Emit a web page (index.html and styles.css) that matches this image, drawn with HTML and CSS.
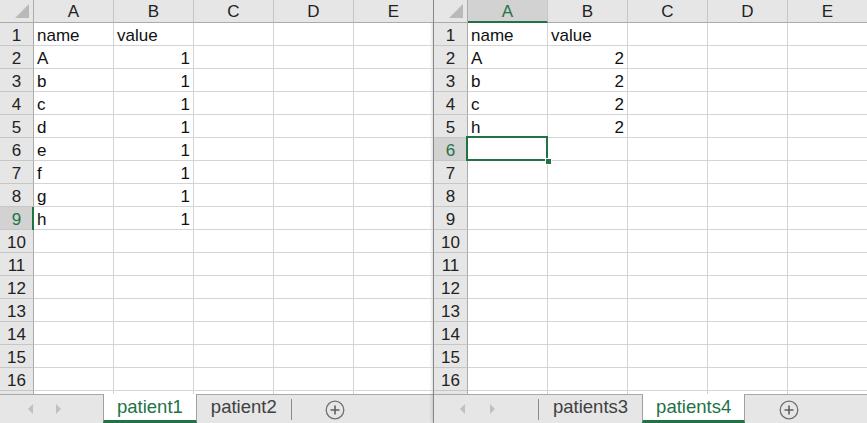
FILE: index.html
```html
<!DOCTYPE html>
<html>
<head>
<meta charset="utf-8">
<link rel="stylesheet" href="styles.css">
</head>
<body>
<div class="app">
  <div class="pane left">
    <div class="grid">
      <div class="c h corner"><svg class="tri" width="16" height="15" viewBox="0 0 16 15"><polygon points="15,0 15,14 1,14" fill="#b9b9b9"/></svg></div>
      <div class="c h">A</div><div class="c h">B</div><div class="c h">C</div><div class="c h">D</div><div class="c h">E</div>

      <div class="c r">1</div><div class="c">name</div><div class="c">value</div><div class="c"></div><div class="c"></div><div class="c"></div>
      <div class="c r">2</div><div class="c">A</div><div class="c n">1</div><div class="c"></div><div class="c"></div><div class="c"></div>
      <div class="c r">3</div><div class="c">b</div><div class="c n">1</div><div class="c"></div><div class="c"></div><div class="c"></div>
      <div class="c r">4</div><div class="c">c</div><div class="c n">1</div><div class="c"></div><div class="c"></div><div class="c"></div>
      <div class="c r">5</div><div class="c">d</div><div class="c n">1</div><div class="c"></div><div class="c"></div><div class="c"></div>
      <div class="c r">6</div><div class="c">e</div><div class="c n">1</div><div class="c"></div><div class="c"></div><div class="c"></div>
      <div class="c r">7</div><div class="c">f</div><div class="c n">1</div><div class="c"></div><div class="c"></div><div class="c"></div>
      <div class="c r">8</div><div class="c">g</div><div class="c n">1</div><div class="c"></div><div class="c"></div><div class="c"></div>
      <div class="c r sel">9</div><div class="c edge">h</div><div class="c n">1</div><div class="c"></div><div class="c"></div><div class="c"></div>
      <div class="c r">10</div><div class="c"></div><div class="c"></div><div class="c"></div><div class="c"></div><div class="c"></div>
      <div class="c r">11</div><div class="c"></div><div class="c"></div><div class="c"></div><div class="c"></div><div class="c"></div>
      <div class="c r">12</div><div class="c"></div><div class="c"></div><div class="c"></div><div class="c"></div><div class="c"></div>
      <div class="c r">13</div><div class="c"></div><div class="c"></div><div class="c"></div><div class="c"></div><div class="c"></div>
      <div class="c r">14</div><div class="c"></div><div class="c"></div><div class="c"></div><div class="c"></div><div class="c"></div>
      <div class="c r">15</div><div class="c"></div><div class="c"></div><div class="c"></div><div class="c"></div><div class="c"></div>
      <div class="c r">16</div><div class="c"></div><div class="c"></div><div class="c"></div><div class="c"></div><div class="c"></div>
      <div class="c r"></div><div class="c"></div><div class="c"></div><div class="c"></div><div class="c"></div><div class="c"></div>
    </div>
    <div class="tabbar">
      <div class="nav nav-left"><span class="arrow prev"></span><span class="arrow next"></span></div>
      <div class="tab active">patient1</div>
      <div class="tab">patient2</div>
      <span class="sep"></span>
      <svg class="plus plus-left" width="20" height="20" viewBox="0 0 20 20"><circle cx="10" cy="10" r="8.8" fill="none" stroke="#707070" stroke-width="1.3"/><path d="M10 5.5V14.5M5.5 10H14.5" stroke="#606060" stroke-width="1.6"/></svg>
    </div>
  </div>

  <div class="pane right">
    <div class="grid">
      <div class="c h corner"><svg class="tri" width="16" height="15" viewBox="0 0 16 15"><polygon points="15,0 15,14 1,14" fill="#b9b9b9"/></svg></div>
      <div class="c h hsel">A</div><div class="c h">B</div><div class="c h">C</div><div class="c h">D</div><div class="c h">E</div>

      <div class="c r">1</div><div class="c">name</div><div class="c">value</div><div class="c"></div><div class="c"></div><div class="c"></div>
      <div class="c r">2</div><div class="c">A</div><div class="c n">2</div><div class="c"></div><div class="c"></div><div class="c"></div>
      <div class="c r">3</div><div class="c">b</div><div class="c n">2</div><div class="c"></div><div class="c"></div><div class="c"></div>
      <div class="c r">4</div><div class="c">c</div><div class="c n">2</div><div class="c"></div><div class="c"></div><div class="c"></div>
      <div class="c r">5</div><div class="c">h</div><div class="c n">2</div><div class="c"></div><div class="c"></div><div class="c"></div>
      <div class="c r sel">6</div><div class="c active-cell"><span class="handle"></span></div><div class="c"></div><div class="c"></div><div class="c"></div><div class="c"></div>
      <div class="c r">7</div><div class="c"></div><div class="c"></div><div class="c"></div><div class="c"></div><div class="c"></div>
      <div class="c r">8</div><div class="c"></div><div class="c"></div><div class="c"></div><div class="c"></div><div class="c"></div>
      <div class="c r">9</div><div class="c"></div><div class="c"></div><div class="c"></div><div class="c"></div><div class="c"></div>
      <div class="c r">10</div><div class="c"></div><div class="c"></div><div class="c"></div><div class="c"></div><div class="c"></div>
      <div class="c r">11</div><div class="c"></div><div class="c"></div><div class="c"></div><div class="c"></div><div class="c"></div>
      <div class="c r">12</div><div class="c"></div><div class="c"></div><div class="c"></div><div class="c"></div><div class="c"></div>
      <div class="c r">13</div><div class="c"></div><div class="c"></div><div class="c"></div><div class="c"></div><div class="c"></div>
      <div class="c r">14</div><div class="c"></div><div class="c"></div><div class="c"></div><div class="c"></div><div class="c"></div>
      <div class="c r">15</div><div class="c"></div><div class="c"></div><div class="c"></div><div class="c"></div><div class="c"></div>
      <div class="c r">16</div><div class="c"></div><div class="c"></div><div class="c"></div><div class="c"></div><div class="c"></div>
      <div class="c r"></div><div class="c"></div><div class="c"></div><div class="c"></div><div class="c"></div><div class="c"></div>
    </div>
    <div class="tabbar">
      <div class="nav nav-right"><span class="arrow prev"></span><span class="arrow next"></span></div>
      <span class="sep"></span>
      <div class="tab">patients3</div>
      <div class="tab active">patients4</div>
      <svg class="plus plus-right" width="20" height="20" viewBox="0 0 20 20"><circle cx="10" cy="10" r="8.8" fill="none" stroke="#707070" stroke-width="1.3"/><path d="M10 5.5V14.5M5.5 10H14.5" stroke="#606060" stroke-width="1.6"/></svg>
    </div>
  </div>
</div>
</body>
</html>
```
FILE: styles.css
```css
html, body {
  margin: 0;
  padding: 0;
  background: #ffffff;
}
body {
  font-family: "Liberation Sans", Arial, sans-serif;
  color: #111;
  width: 867px;
  height: 423px;
  overflow: hidden;
}
.app {
  display: flex;
  width: 867px;
  height: 423px;
}
.pane {
  display: flex;
  flex-direction: column;
  height: 423px;
  overflow: hidden;
  background: #fff;
}
.left {
  width: 434px;
  flex: 0 0 434px;
  box-sizing: border-box;
  border-right: 1px solid #9c9c9c;
}
.right {
  flex: 0 0 433px;
  width: 433px;
  box-shadow: -2px 0 3px rgba(0, 0, 0, 0.16);
}
.grid {
  display: grid;
  grid-template-columns: 34px repeat(5, 80px);
  grid-auto-rows: 23px;
  height: 394px;
  flex: 0 0 394px;
  overflow: hidden;
}
.c {
  box-sizing: border-box;
  border-right: 1px solid #d4d4d4;
  border-bottom: 1px solid #d4d4d4;
  padding: 3px 3px 0 3px;
  font-size: 17px;
  line-height: 19px;
  white-space: nowrap;
  overflow: hidden;
  position: relative;
}
.n {
  text-align: right;
}
.h {
  background: #e6e6e6;
  border-right-color: #c6c6c6;
  border-bottom-color: #ababab;
  text-align: center;
  padding: 2px 0 0 0;
  color: #222;
}
.corner {
  border-right-color: #ababab;
}
.tri {
  position: absolute;
  right: 3px;
  bottom: 3px;
}
.r {
  background: #e6e6e6;
  border-right-color: #ababab;
  border-bottom-color: #c6c6c6;
  text-align: center;
  padding: 3px 0 0 0;
  color: #222;
}
.sel {
  background: #d2d2d2;
  color: #217346;
}
.hsel {
  background: #d2d2d2;
  color: #217346;
  border-bottom: 2px solid #217346;
}
.edge {
  overflow: visible;
  z-index: 2;
}
.edge::before {
  content: "";
  position: absolute;
  left: -2px;
  top: 0;
  bottom: -1px;
  width: 2px;
  background: #217346;
}
.active-cell {
  overflow: visible;
  z-index: 3;
}
.active-cell::after {
  content: "";
  position: absolute;
  left: -2px;
  top: -2px;
  right: -1px;
  bottom: -1px;
  border: 2px solid #217346;
}
.handle {
  position: absolute;
  right: -5px;
  bottom: -5px;
  width: 5px;
  height: 5px;
  background: #217346;
  border: 1px solid #ffffff;
  z-index: 4;
}
.tabbar {
  flex: 1 1 auto;
  display: flex;
  align-items: stretch;
  background: #e6e6e6;
  border-top: 1px solid #a8a8a8;
  box-sizing: border-box;
}
.nav {
  display: flex;
  align-items: center;
  flex: 0 0 auto;
}
.nav-left {
  width: 103px;
}
.nav-right {
  width: 104px;
}
.nav-left .prev {
  margin-left: 28px;
}
.nav-right .prev {
  margin-left: 26px;
}
.arrow {
  width: 0;
  height: 0;
  border-top: 5px solid transparent;
  border-bottom: 5px solid transparent;
}
.prev {
  border-right: 5px solid #c0c0c0;
}
.next {
  border-left: 5px solid #c0c0c0;
  margin-left: 23px;
}
.nav-right .next {
  margin-left: 25px;
}
.tab {
  display: flex;
  align-items: center;
  padding: 0 14px 2px 14px;
  font-size: 18.5px;
  color: #404040;
  border-bottom: 3px solid transparent;
  white-space: nowrap;
}
.tab.active {
  background: #ffffff;
  color: #217346;
  border-left: 1px solid #a0a0a0;
  border-right: 1px solid #a0a0a0;
  border-bottom: 3px solid #217346;
  margin-top: -1px;
  padding: 1px 13px 2px 13px;
}
.sep {
  width: 1px;
  background: #8c8c8c;
  align-self: center;
  height: 21px;
  margin-top: 1px;
  flex: 0 0 1px;
}
.plus {
  align-self: center;
  flex: 0 0 20px;
  margin-top: 1px;
}
.plus-left {
  margin-left: 33px;
}
.plus-right {
  margin-left: 34px;
}
```
